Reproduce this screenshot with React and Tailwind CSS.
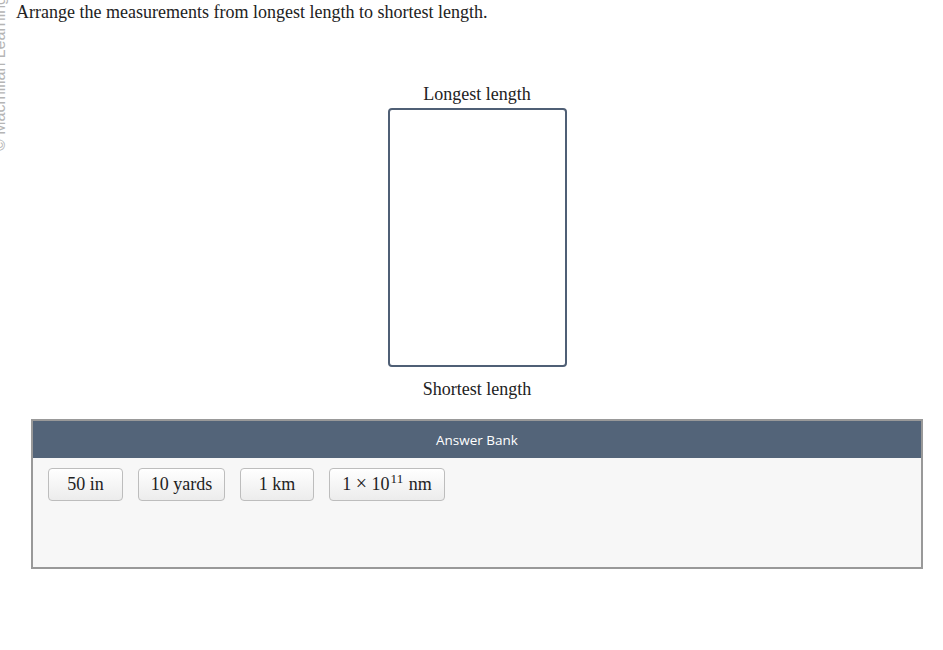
export default function App() {
  const items = [
    { id: 1, label: <>50 in</>, w: 'w-[75px]' },
    { id: 2, label: <>10 yards</>, w: 'w-[87px]' },
    { id: 3, label: <>1 km</>, w: 'w-[74px]' },
    { id: 4, label: <>1 <span className="text-[20px] leading-none">×</span> 10<sup className="text-[13px] leading-none relative -top-[7px] ml-[1px] mr-[1px]">11</sup> nm</>, w: 'w-[116px]' },
  ];

  return (
    <div className="relative w-[943px] h-[650px] bg-white font-['Liberation_Serif',serif] text-[#222] overflow-hidden">
      {/* vertical credit on the left edge */}
      <div className="absolute left-[-80px] top-[68px] w-[160px] -rotate-90 text-[16px] leading-[16px] text-[#b5b5b5] font-['Liberation_Sans',sans-serif] whitespace-nowrap text-right">
        © Macmillan Learning
      </div>

      <div className="pl-[16px] pt-[1px] text-[18px] leading-[22px]">
        Arrange the measurements from longest length to shortest length.
      </div>

      <div className="flex flex-col items-center ml-[31px] w-[892px] mt-[60px]">
        <div className="text-[18px] leading-[22px]">Longest length</div>
        <div className="mt-[3px] w-[179px] h-[259px] border-2 border-[#4f5f75] rounded-[4px]"></div>
        <div className="mt-[11px] text-[18px] leading-[22px]">Shortest length</div>
      </div>

      <div className="ml-[31px] mt-[19px] w-[892px] h-[150px] border-2 border-[#999] flex flex-col">
        <div className="h-[37px] bg-[#536479] flex items-center justify-center text-white text-[13.5px] pt-[2px] font-['Open_Sans',sans-serif]">
          Answer Bank
        </div>
        <div className="flex-1 bg-[#f7f7f7] flex items-start gap-[15px] pl-[15px] pt-[10px]">
          {items.map(it => (
            <div
              key={it.id}
              className={`${it.w} h-[33px] flex items-center justify-center border border-[#bdbdbd] rounded-[4px] bg-gradient-to-b from-white to-[#ececec] text-[18px] text-[#222]`}
            >
              <span>{it.label}</span>
            </div>
          ))}
        </div>
      </div>
    </div>
  );
}
